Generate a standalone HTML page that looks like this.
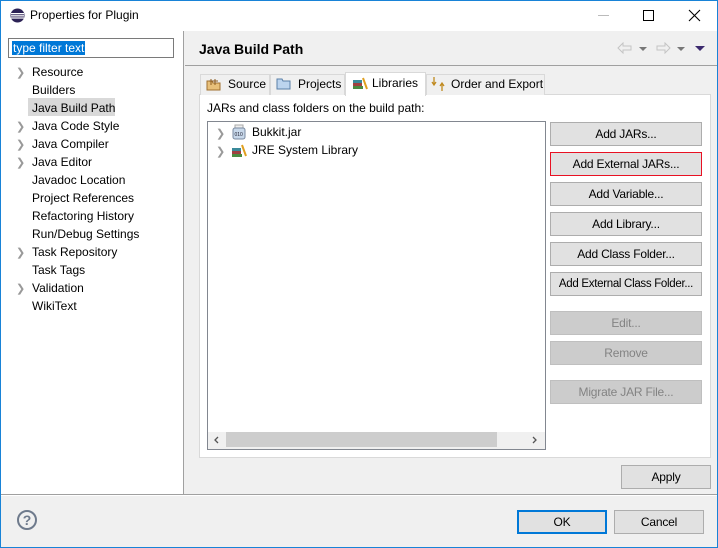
<!DOCTYPE html>
<html><head><style>
*{box-sizing:border-box;margin:0;padding:0}
body{width:718px;height:548px;position:relative;overflow:hidden;background:#f0f0f0;font-family:"Liberation Sans",sans-serif;font-size:12px;color:#000}
.a{position:absolute;white-space:nowrap}
.win{left:0;top:0;width:718px;height:548px;border:1px solid #1883d7}
.title{left:1px;top:1px;width:716px;height:30px;background:#fff}
.left{left:1px;top:31px;width:183px;height:463px;background:#fff;border-right:1px solid #a0a0a0}
.tree div{position:absolute;left:32px;height:18px;line-height:18px;white-space:nowrap}
.chev{position:absolute;left:16px;color:#999;font-size:11px}
.btn{position:absolute;left:550px;width:152px;height:24px;background:#e1e1e1;border:1px solid #adadad;text-align:center;line-height:22px;white-space:nowrap;letter-spacing:-0.2px}
.dis{background:#ccc;border-color:#bfbfbf;color:#838383}
.tab{position:absolute;top:74px;height:21px;background:#f0f0f0;border:1px solid #d9d9d9;border-bottom:none;line-height:19px;padding-left:27px;white-space:nowrap}
</style></head><body>
<div class="a win"></div>
<div class="a title"></div>
<svg class="a" style="left:10px;top:8px" width="15" height="15" viewBox="0 0 15 15"><circle cx="7.5" cy="7.5" r="7" fill="#2c2255"/><rect x="1" y="5" width="13" height="1.3" fill="#fff"/><rect x="1" y="7.2" width="13" height="1.3" fill="#fff"/><rect x="1" y="9.4" width="13" height="1.2" fill="#fff"/></svg>
<div class="a" style="left:30px;top:8px;font-size:12px">Properties for Plugin</div>
<div class="a" style="left:598px;top:15px;width:11px;height:1px;background:#bbb"></div>
<div class="a" style="left:643px;top:10px;width:11px;height:11px;border:1px solid #000"></div>
<svg class="a" style="left:688px;top:9px" width="13" height="13"><path d="M1 1L12 12M12 1L1 12" stroke="#000" stroke-width="1.1"/></svg>

<div class="a left"></div>
<div class="a" style="left:8px;top:38px;width:166px;height:20px;border:1px solid #7a7a7a;background:#fff"></div>
<div class="a" style="left:12px;top:41px;height:14px;line-height:14px;background:#0078d7;color:#fff;padding:0 1px">type filter text</div>
<div class="a" style="left:28px;top:98px;width:87px;height:18px;background:#d9d9d9"></div>
<div class="tree">
<span class="a chev" style="top:66px">&#x276F;</span><div style="top:63px">Resource</div>
<div style="top:81px">Builders</div>
<div style="top:99px">Java Build Path</div>
<span class="a chev" style="top:120px">&#x276F;</span><div style="top:117px">Java Code Style</div>
<span class="a chev" style="top:138px">&#x276F;</span><div style="top:135px">Java Compiler</div>
<span class="a chev" style="top:156px">&#x276F;</span><div style="top:153px">Java Editor</div>
<div style="top:171px">Javadoc Location</div>
<div style="top:189px">Project References</div>
<div style="top:207px">Refactoring History</div>
<div style="top:225px">Run/Debug Settings</div>
<span class="a chev" style="top:246px">&#x276F;</span><div style="top:243px">Task Repository</div>
<div style="top:261px">Task Tags</div>
<span class="a chev" style="top:282px">&#x276F;</span><div style="top:279px">Validation</div>
<div style="top:297px">WikiText</div>
</div>

<div class="a" style="left:199px;top:41px;font-size:14px;font-weight:bold">Java Build Path</div>
<div class="a" style="left:185px;top:65px;width:532px;height:1px;background:#a0a0a0"></div>
<svg class="a" style="left:617px;top:42px" width="16" height="12"><path d="M1 6l5-5v3h8v4H6v3z" fill="none" stroke="#c4c4c4"/></svg>
<div class="a" style="left:639px;top:47px;border:4px solid transparent;border-top:4px solid #777"></div>
<svg class="a" style="left:655px;top:42px" width="16" height="12"><path d="M15 6l-5-5v3H2v4h8v3z" fill="none" stroke="#c4c4c4"/></svg>
<div class="a" style="left:677px;top:47px;border:4px solid transparent;border-top:4px solid #777"></div>
<div class="a" style="left:695px;top:46px;border:5px solid transparent;border-top:5px solid #3c2a6e"></div>

<div class="a" style="left:199px;top:94px;width:512px;height:364px;background:#fff;border:1px solid #d9d9d9"></div>
<div class="tab" style="left:200px;width:70px">Source</div>
<div class="tab" style="left:270px;width:75px">Projects</div>
<div class="tab" style="left:426px;width:119px;padding-left:24px">Order and Export</div>
<div class="tab" style="left:345px;top:72px;height:24px;width:81px;background:#fff;line-height:21px;padding-left:26px">Libraries</div>
<svg class="a" style="left:206px;top:77px" width="16" height="14"><path d="M1 4h5l1 2h7v7H1z" fill="#e8c07a" stroke="#a07030"/><path d="M5 2v6M9 2v6M3 4h9" stroke="#8a5a20"/></svg>
<svg class="a" style="left:276px;top:76px" width="16" height="14"><path d="M1 3h5l1 2h7v8H1z" fill="#bcd4ee" stroke="#5a7fa8"/></svg>
<svg class="a" style="left:352px;top:76px" width="16" height="14"><rect x="1" y="4" width="9" height="3" fill="#3a8a9a"/><rect x="1" y="7" width="9" height="3" fill="#a04040"/><rect x="1" y="10" width="10" height="3" fill="#4a8a40"/><path d="M11 2l4 11" stroke="#e0a020" stroke-width="2"/></svg>
<svg class="a" style="left:431px;top:76px" width="16" height="16"><path d="M3 1v7M1 6l2 3 2-3" stroke="#c08a20" fill="none" stroke-width="1.3"/><path d="M11 15V8M9 10l2-3 2 3" stroke="#c08a20" fill="none" stroke-width="1.3"/></svg>
<div class="a" style="left:207px;top:101px">JARs and class folders on the build path:</div>

<div class="a" style="left:207px;top:121px;width:339px;height:329px;background:#fff;border:1px solid #828790"></div>
<span class="a" style="left:216px;top:127px;color:#999;font-size:11px">&#x276F;</span>
<span class="a" style="left:216px;top:145px;color:#999;font-size:11px">&#x276F;</span>
<svg class="a" style="left:232px;top:124px" width="14" height="16"><rect x="3" y="1" width="8" height="3" fill="#eee" stroke="#aaa"/><rect x="1" y="4" width="12" height="11" rx="2" fill="#c8d8ea" stroke="#7a8aa0"/><text x="2.5" y="12" font-size="5" fill="#223">010</text></svg>
<div class="a" style="left:252px;top:125px">Bukkit.jar</div>
<svg class="a" style="left:231px;top:143px" width="16" height="14"><rect x="1" y="5" width="9" height="3" fill="#3a8a9a"/><rect x="1" y="8" width="9" height="3" fill="#a04040"/><rect x="1" y="11" width="10" height="3" fill="#4a8a40"/><path d="M11 2l4 11" stroke="#e0a020" stroke-width="2"/></svg>
<div class="a" style="left:252px;top:143px">JRE System Library</div>
<div class="a" style="left:208px;top:432px;width:337px;height:17px;background:#f0f0f0"></div>
<div class="a" style="left:226px;top:432px;width:271px;height:15px;background:#cdcdcd"></div>
<svg class="a" style="left:213px;top:436px" width="6" height="8"><path d="M5 1L2 4l3 3" stroke="#555" fill="none" stroke-width="1.3"/></svg>
<svg class="a" style="left:532px;top:436px" width="6" height="8"><path d="M1 1l3 3-3 3" stroke="#555" fill="none" stroke-width="1.3"/></svg>

<div class="btn" style="top:122px">Add JARs...</div>
<div class="btn" style="top:152px;border-color:#e81123">Add External JARs...</div>
<div class="btn" style="top:182px">Add Variable...</div>
<div class="btn" style="top:212px">Add Library...</div>
<div class="btn" style="top:242px">Add Class Folder...</div>
<div class="btn" style="top:272px;font-size:11.5px;letter-spacing:-0.3px">Add External Class Folder...</div>
<div class="btn dis" style="top:311px">Edit...</div>
<div class="btn dis" style="top:341px">Remove</div>
<div class="btn dis" style="top:380px">Migrate JAR File...</div>

<div class="btn" style="left:621px;top:465px;width:90px">Apply</div>
<div class="a" style="left:1px;top:494px;width:716px;height:1px;background:#a0a0a0"></div>
<div class="a" style="left:1px;top:495px;width:716px;height:1px;background:#fff"></div>
<div class="a" style="left:17px;top:510px;width:20px;height:20px;border:2px solid #6e7a8c;border-radius:50%;text-align:center;line-height:16px;font-weight:bold;color:#6e7a8c;font-size:14px">?</div>
<div class="btn" style="left:517px;top:510px;width:90px;border:2px solid #0078d7;line-height:20px">OK</div>
<div class="btn" style="left:614px;top:510px;width:90px">Cancel</div>
</body></html>
